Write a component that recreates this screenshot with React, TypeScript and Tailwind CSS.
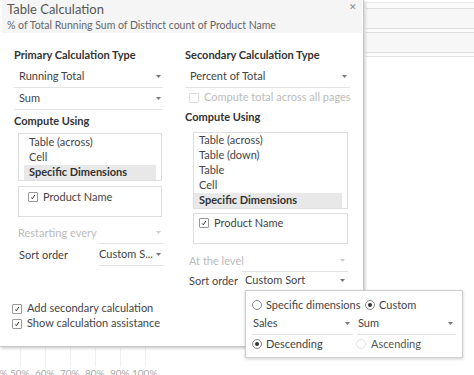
import React from "react";

const Arrow = () => (
  <svg width="5" height="3" viewBox="0 0 5 3" className="shrink-0">
    <path d="M0 0h5L2.5 3z" fill="#777" />
  </svg>
);

const Check = ({ checked, disabled }: { checked?: boolean; disabled?: boolean }) => (
  <span
    className={
      disabled
        ? "w-[10px] h-[10px] border border-[#dcdcdc] rounded-[1px] flex items-center justify-center bg-white shrink-0"
        : "w-[10px] h-[10px] border border-[#999] rounded-[1px] flex items-center justify-center bg-white shrink-0"
    }
  >
    {checked && (
      <svg width="6" height="6" viewBox="0 0 6 6">
        <path d="M1.2 3.4 L2.4 4.8 L4.8 1" stroke="#333" strokeWidth="1" fill="none" />
      </svg>
    )}
  </span>
);

const Radio = ({ on, faint }: { on?: boolean; faint?: boolean }) => (
  <span
    className={
      faint
        ? "w-[10px] h-[10px] rounded-full border border-[#e2e2e2] flex items-center justify-center shrink-0"
        : "w-[10px] h-[10px] rounded-full border border-[#888] flex items-center justify-center shrink-0"
    }
  >
    {on && <span className="w-[4px] h-[4px] rounded-full bg-[#333]" />}
  </span>
);

const Select = ({ value, className }: { value: string; className: string }) => (
  <div className={`flex items-center justify-between h-[22px] border-b border-[#e3e3e3] ${className}`}>
    <span className="whitespace-nowrap">{value}</span>
    <Arrow />
  </div>
);

export default function App() {
  const gridX = [20, 45, 70, 95, 120, 145];
  return (
    <div
      className="relative w-[474px] h-[375px] overflow-hidden bg-white text-[11px] text-[#444]"
      style={{ fontFamily: "Lato, 'Open Sans', sans-serif" }}
    >
      {/* background content */}
      <div className="flex flex-col h-full">
        <div className="ml-[366px] pt-[2px] flex flex-col">
          <div className="h-[6px] border-t border-[#ebebeb] bg-[#fafafa]" />
          <div className="h-[20px] border-t border-[#dedede] bg-[#f7f7f7]" />
          <div className="h-[4px] border-t border-[#dedede] bg-[#fbfbfb]" />
          <div className="h-[20px] border-t border-[#dedede] bg-[#f7f7f7]" />
          <div className="h-[4px] border-t border-[#dedede] bg-[#fbfbfb]" />
          <div className="border-t border-[#e2e2e2]" />
        </div>
        <div className="flex-1" />
        <div className="relative h-[27px]">
          {gridX.map((x) => (
            <div key={x} className="absolute top-0 h-[19px] border-l border-[#f0f0f0]" style={{ left: x }} />
          ))}
          <div className="absolute top-[20px] left-0 flex text-[10px] text-[#aaa] leading-none">
            <span className="absolute left-[-12px] w-[17px] text-right">40%</span>
            <span className="absolute left-[10px]">50%</span>
            <span className="absolute left-[35px]">60%</span>
            <span className="absolute left-[60px]">70%</span>
            <span className="absolute left-[85px]">80%</span>
            <span className="absolute left-[110px]">90%</span>
            <span className="absolute left-[132px]">100%</span>
          </div>
        </div>
      </div>

      {/* dialog */}
      <div className="absolute left-0 top-0 w-[364px] h-[347px] bg-white border-r border-b border-[#c9c9c9] shadow-[1px_1px_3px_rgba(0,0,0,0.25)] flex flex-col">
        <div className="relative ml-[2px] mr-[1px] h-[33px] bg-[#f5f5f5] pl-[5px] pt-[1px]">
          <div className="text-[13px] leading-[16px] text-[#555]">Table Calculation</div>
          <div className="text-[10.5px] leading-[14px] mt-[1px] text-[#666] whitespace-nowrap">
            % of Total Running Sum of Distinct count of Product Name
          </div>
          <div className="absolute right-[5px] top-[2px] text-[9px] text-[#888] leading-none">✕</div>
        </div>

        <div className="flex pl-[14px] pt-[15px] gap-[22px] flex-1">
          {/* left column */}
          <div className="w-[149px] flex flex-col">
            <div className="h-[14px] leading-[14px] font-bold text-[#333]">Primary Calculation Type</div>
            <Select value="Running Total" className="mt-[4px] pl-[5px] pr-[2px]" />
            <Select value="Sum" className="pl-[5px] pr-[2px]" />
            <div className="mt-[4px] h-[14px] leading-[14px] font-bold text-[#333]">Compute Using</div>
            <div className="mt-[5px] ml-[4px] mr-[1px] h-[48px] border border-[#dedede] pl-[5px] pr-[5px] pt-[1px] overflow-hidden">
              <div className="h-[15px] leading-[14px] pl-[5px]">Table (across)</div>
              <div className="h-[15px] leading-[14px] pl-[5px]">Cell</div>
              <div className="h-[15px] leading-[14px] pl-[5px] bg-[#e8e8e8] font-bold text-[#333]">Specific Dimensions</div>
            </div>
            <div className="mt-[5px] ml-[4px] mr-[1px] h-[31px] border border-[#dedede] pl-[9px] pt-[3px]">
              <div className="flex items-center gap-[5px] h-[14px]">
                <Check checked />
                <span>Product Name</span>
              </div>
            </div>
            <div className="mt-[5px] flex items-center h-[22px]">
              <span className="w-[85px] pl-[4px] text-[#bbb] whitespace-nowrap">Restarting every</span>
              <div className="flex-1 h-full flex items-center justify-end border-b border-[#e3e3e3] pr-[2px]">
                <svg width="5" height="3" viewBox="0 0 5 3">
                  <path d="M0 0h5L2.5 3z" fill="#ccc" />
                </svg>
              </div>
            </div>
            <div className="flex items-center h-[22px]">
              <span className="w-[85px] pl-[5px]">Sort order</span>
              <Select value="Custom S..." className="flex-1 pr-[2px]" />
            </div>
            <div className="mt-[35px] -ml-[2px] flex flex-col">
              <div className="flex items-center gap-[5px] h-[15px]">
                <Check checked />
                <span className="whitespace-nowrap">Add secondary calculation</span>
              </div>
              <div className="flex items-center gap-[5px] h-[15px]">
                <Check checked />
                <span className="whitespace-nowrap">Show calculation assistance</span>
              </div>
            </div>
          </div>

          {/* right column */}
          <div className="w-[165px] flex flex-col">
            <div className="h-[14px] leading-[14px] font-bold text-[#333] whitespace-nowrap">Secondary Calculation Type</div>
            <Select value="Percent of Total" className="mt-[4px] pl-[5px] pr-[3px]" />
            <div className="h-[19px] flex items-center gap-[5px] pl-[4px]">
              <Check disabled />
              <span className="text-[#bbb] whitespace-nowrap">Compute total across all pages</span>
            </div>
            <div className="mt-[3px] h-[14px] leading-[14px] font-bold text-[#333]">Compute Using</div>
            <div className="mt-[8px] ml-[8px] mr-[2px] h-[77px] border border-[#dedede] pr-[5px]">
              <div className="h-[15px] leading-[14px] pl-[5px]">Table (across)</div>
              <div className="h-[15px] leading-[14px] pl-[5px]">Table (down)</div>
              <div className="h-[15px] leading-[14px] pl-[5px]">Table</div>
              <div className="h-[15px] leading-[14px] pl-[5px]">Cell</div>
              <div className="h-[15px] leading-[14px] pl-[5px] bg-[#e8e8e8] font-bold text-[#333]">Specific Dimensions</div>
            </div>
            <div className="mt-[4px] ml-[8px] mr-[2px] h-[31px] border border-[#dedede] pl-[5px] pt-[2px]">
              <div className="flex items-center gap-[5px] h-[14px]">
                <Check checked />
                <span>Product Name</span>
              </div>
            </div>
            <div className="mt-[6px] flex items-center h-[22px]">
              <span className="w-[57px] pl-[4px] text-[#bbb] whitespace-nowrap">At the level</span>
              <div className="flex-1 h-full flex items-center justify-end border-b border-[#e3e3e3] pr-[3px] mr-[2px]">
                <svg width="5" height="3" viewBox="0 0 5 3">
                  <path d="M0 0h5L2.5 3z" fill="#ccc" />
                </svg>
              </div>
            </div>
            <div className="-mt-[2px] flex items-center h-[22px]">
              <span className="w-[60px] pl-[4px] whitespace-nowrap">Sort order</span>
              <Select value="Custom Sort" className="flex-1 pr-[3px] mr-[2px]" />
            </div>
          </div>
        </div>
      </div>

      {/* popover */}
      <div className="absolute left-[245px] top-[290px] w-[218px] h-[68px] bg-white border border-[#d0d0d0] shadow-[0_1px_3px_rgba(0,0,0,0.2)] pl-[6px] pr-[6px] pt-[6px] flex flex-col">
        <div className="flex items-center h-[16px]">
          <div className="flex items-center gap-[4px] w-[113px]">
            <Radio />
            <span className="whitespace-nowrap">Specific dimensions</span>
          </div>
          <div className="flex items-center gap-[4px]">
            <Radio on />
            <span>Custom</span>
          </div>
        </div>
        <div className="flex h-[22px] gap-[4px]">
          <Select value="Sales" className="w-[101px] pl-[1px] pr-[3px]" />
          <Select value="Sum" className="flex-1 pl-[1px] pr-[3px]" />
        </div>
        <div className="flex items-center h-[18px]">
          <div className="flex items-center gap-[4px] w-[104px]">
            <Radio on />
            <span>Descending</span>
          </div>
          <div className="flex items-center gap-[5px]">
            <Radio faint />
            <span className="text-[#555]">Ascending</span>
          </div>
        </div>
      </div>
    </div>
  );
}
